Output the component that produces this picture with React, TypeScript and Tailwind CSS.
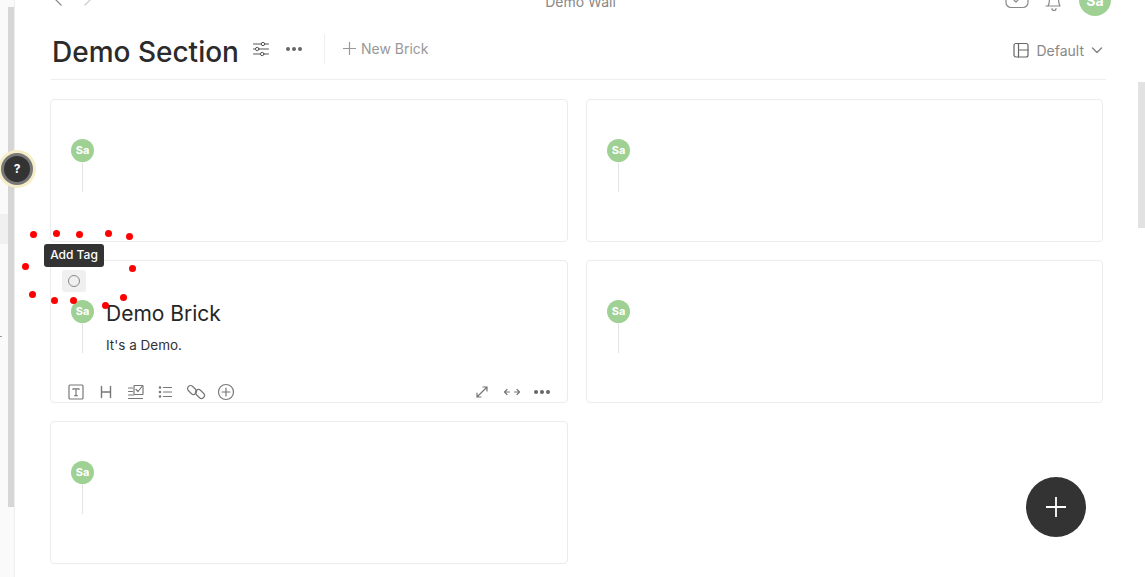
import React from 'react';

const redDots = [
  [33, 234], [56, 233], [79, 234], [108, 233], [129, 236], [25, 266],
  [132, 268], [32, 294], [54, 300], [73, 300], [105, 305], [123, 297],
];

function Avatar() {
  return (
    <div className="w-[23px] h-[23px] rounded-full bg-[#9fd195] text-white text-[11px] font-bold flex items-center justify-center">
      Sa
    </div>
  );
}

const iconProps = {
  fill: 'none',
  stroke: 'currentColor',
  strokeWidth: 1.2,
  strokeLinecap: 'round' as const,
  strokeLinejoin: 'round' as const,
};

function Dots({ color = '#666' }: { color?: string }) {
  return (
    <svg width="18" height="6" viewBox="0 0 18 6">
      <circle cx="3" cy="3" r="2" fill={color} />
      <circle cx="9" cy="3" r="2" fill={color} />
      <circle cx="15" cy="3" r="2" fill={color} />
    </svg>
  );
}

function BrickToolbar() {
  return (
    <div className="flex items-center justify-between h-[20px] text-[#777]">
      <div className="flex items-center gap-[10px]">
        {/* text */}
        <svg width="20" height="20" viewBox="0 0 20 20" {...iconProps}>
          <rect x="3" y="3" width="14" height="14" rx="1" />
          <path d="M7 7.500V6.800h6v.7M10 6.800v6.900M8.700 13.700h2.600" />
        </svg>
        {/* heading */}
        <svg width="20" height="20" viewBox="0 0 20 20" {...iconProps} strokeWidth={1.4}>
          <path d="M5.500 4.500v11M14.500 4.500v11M5.500 10h9" />
        </svg>
        {/* checklist */}
        <svg width="20" height="20" viewBox="0 0 20 20" {...iconProps}>
          <path d="M2.500 6h4M2.500 9.500h4M2.500 13h5M2.500 16.500h14" />
          <rect x="8" y="3.500" width="9" height="9" rx="0.5" />
          <path d="M10 7.500l2 2 4-5" />
        </svg>
        {/* list */}
        <svg width="20" height="20" viewBox="0 0 20 20" {...iconProps}>
          <path d="M7.500 5.500h8M7.500 10h8M7.500 14.500h8" />
          <circle cx="4" cy="5.500" r="0.7" fill="currentColor" />
          <circle cx="4" cy="10" r="0.7" fill="currentColor" />
          <circle cx="4" cy="14.500" r="0.7" fill="currentColor" />
        </svg>
        {/* link */}
        <svg width="20" height="20" viewBox="0 0 20 20" {...iconProps}>
          <rect x="1" y="5" width="10" height="6" rx="3" transform="rotate(45 6 8)" />
          <rect x="9" y="9" width="10" height="6" rx="3" transform="rotate(45 14 12)" />
        </svg>
        {/* add */}
        <svg width="20" height="20" viewBox="0 0 20 20" {...iconProps}>
          <circle cx="10" cy="10" r="7.500" />
          <path d="M10 6v8M6 10h8" />
        </svg>
      </div>
      <div className="flex items-center gap-[10px] -mr-[1px]">
        <svg width="20" height="20" viewBox="0 0 20 20" {...iconProps}>
          <path d="M5 15l10-10M11 5h4v4M5 11v4h4" />
        </svg>
        <svg width="20" height="20" viewBox="0 0 20 20" {...iconProps}>
          <path d="M2.500 10h5M12.500 10h5M5 7.500L2.500 10 5 12.500M15 7.500l2.500 2.500-2.500 2.500" />
        </svg>
        <div className="w-[20px] flex justify-center">
          <Dots />
        </div>
      </div>
    </div>
  );
}

function Card({ filled }: { filled?: boolean }) {
  return (
    <div className="h-[143px] rounded-[4px] border border-[#ececec] bg-white pl-[20px] pr-[16px] pt-[39px] flex flex-col">
      <div className="flex gap-[12px] h-[82px]">
        <div className="flex flex-col items-center w-[23px]">
          <Avatar />
          <div className="w-px h-[30px] bg-[#e4e4e4]" />
        </div>
        {filled && (
          <div className="-mt-[1px]">
            <div className="text-[21px] leading-[30px] text-[#262626]">Demo Brick</div>
            <div className="text-[13.500px] leading-[20px] text-[#333] mt-[6px]">It's a Demo.</div>
          </div>
        )}
      </div>
      {filled && (
        <div className="-ml-[5px]">
          <BrickToolbar />
        </div>
      )}
    </div>
  );
}

export default function App() {
  return (
    <div
      className="relative flex h-[577px] w-[1145px] overflow-hidden bg-white"
      style={{ fontFamily: 'Inter, "Open Sans", sans-serif' }}
    >
      {/* Sidebar strip */}
      <div className="flex w-[15px] shrink-0 bg-[#fafafa] border-r border-[#eeeeee]">
        <div className="w-[8px] pt-[214px]">
          <div className="h-[30px] bg-[#f0f0f0]" />
          <div className="mt-[92px] h-px w-[2px] bg-[#999]" />
        </div>
        <div className="w-[6px] pt-[7px]">
          <div className="h-[500px] bg-[#d6d6d6]" />
        </div>
      </div>

      {/* Main */}
      <div className="w-[1123px] shrink-0 pl-[35px]">
        {/* Top bar */}
        <div className="-mt-[16px] grid h-[32px] w-[1061px] grid-cols-[1fr_auto_1fr] items-center text-[#888]">
          <div className="flex items-center gap-[20px] pl-[3px]">
            <svg width="10" height="14" viewBox="0 0 10 14" {...iconProps}>
              <path d="M8 2L3 7l5 5" />
            </svg>
            <svg width="10" height="14" viewBox="0 0 10 14" {...iconProps} stroke="#ccc">
              <path d="M2 2l5 5-5 5" />
            </svg>
          </div>
          <div className="pt-[3px] text-[14px]">Demo Wall</div>
          <div className="flex items-center justify-end gap-[15px]">
            <svg width="24" height="32" viewBox="0 0 24 32" {...iconProps}>
              <rect x="1" y="8" width="22" height="15.500" rx="5" />
              <path d="M8 15l3 3 5-5" />
            </svg>
            <svg width="20" height="32" viewBox="0 0 20 32" {...iconProps}>
              <path d="M4 22c1.500-2 1.500-4 1.500-8a4.500 4.500 0 019 0c0 4 0 6 1.500 8H2z" />
              <path d="M8 24.500a2 2 0 004 0" />
            </svg>
            <div className="w-[32px] h-[32px] rounded-full bg-[#9fd195] text-white text-[14px] font-bold flex items-center justify-center">
              Sa
            </div>
          </div>
        </div>

        {/* Section header */}
        <div className="mt-[16px] ml-px flex h-[48px] w-[1055px] items-center justify-between border-b border-[#eeeeee]">
          <div className="flex items-center pb-[8px]">
            <h1 className="ml-px text-[28px] font-medium leading-[38px] text-[#2b2b2b]">Demo Section</h1>
            <div className="ml-[13px] flex items-center gap-[15px] pb-[6px] text-[#555]">
              <svg width="18" height="18" viewBox="0 0 18 18" {...iconProps} strokeWidth={1}>
                <path d="M1.500 4h8M13 4h3.500M1.500 9h2M7 9h9.500M1.500 14h7M12 14h4.500" />
                <circle cx="11" cy="4" r="1.700" />
                <circle cx="5.200" cy="9" r="1.700" />
                <circle cx="10.200" cy="14" r="1.700" />
              </svg>
              <Dots />
            </div>
            <div className="ml-[21px] mb-[6px] h-[30px] w-px bg-[#eeeeee]" />
            <div className="ml-[18px] flex items-center gap-[5px] pb-[6px] text-[14px] text-[#999]">
              <svg width="13" height="13" viewBox="0 0 13 13" {...iconProps}>
                <path d="M6.500 .5v12M.5 6.500h12" />
              </svg>
              New Brick
            </div>
          </div>
          <div className="flex items-center gap-[7px] pr-[3px] pb-[11px] text-[14px] text-[#888]">
            <svg width="16" height="16" viewBox="0 0 16 16" {...iconProps} stroke="#666">
              <rect x="1" y="1.500" width="14" height="13.500" rx="2" />
              <path d="M5.500 1.500v13.500M5.500 8H15" />
            </svg>
            <span>Default</span>
            <svg width="12" height="12" viewBox="0 0 12 12" {...iconProps} strokeWidth={1.500}>
              <path d="M1.500 4l4.500 4.500L10.500 4" />
            </svg>
          </div>
        </div>

        {/* Bricks */}
        <div className="mt-[19px] grid w-[1053px] grid-cols-[518px_517px] gap-x-[18px] gap-y-[18px]">
          <Card />
          <Card />
          <Card filled />
          <Card />
          <Card />
        </div>
      </div>

      {/* Page scrollbar */}
      <div className="w-[7px] shrink-0 pt-[82px]">
        <div className="h-[146px] bg-[#e2e2e2]" />
      </div>

      {/* Help button */}
      <div className="absolute left-[-2px] top-[150px] flex h-[38px] w-[38px] items-center justify-center rounded-full bg-[#f5ecc8]">
        <div className="flex h-[32px] w-[32px] items-center justify-center rounded-full border-[3px] border-[#777] bg-[#333] text-[12px] font-bold text-white">
          ?
        </div>
      </div>

      {/* Tag tooltip */}
      <div className="absolute left-[44px] top-[244px] flex h-[23px] w-[60px] items-center justify-center rounded-[3px] bg-[#333] pb-[1px] text-[12px] font-medium text-white">
        Add Tag
      </div>
      <div className="absolute left-[62px] top-[270px] flex h-[22px] w-[24px] items-center justify-center rounded-[3px] bg-[#f0f0f0]">
        <div className="h-[12px] w-[12px] rounded-full border border-[#888]" />
      </div>

      {redDots.map(([x, y], i) => (
        <div
          key={i}
          className="absolute h-[7px] w-[7px] rounded-full bg-[#ff0000]"
          style={{ left: x - 3.5, top: y - 3.5 }}
        />
      ))}

      {/* Add button */}
      <div className="absolute left-[1026px] top-[477px] flex h-[60px] w-[60px] items-center justify-center rounded-full bg-[#333]">
        <svg width="20" height="20" viewBox="0 0 20 20" fill="none" stroke="#fff" strokeWidth="1.800">
          <path d="M10 0v20M0 10h20" />
        </svg>
      </div>
    </div>
  );
}
